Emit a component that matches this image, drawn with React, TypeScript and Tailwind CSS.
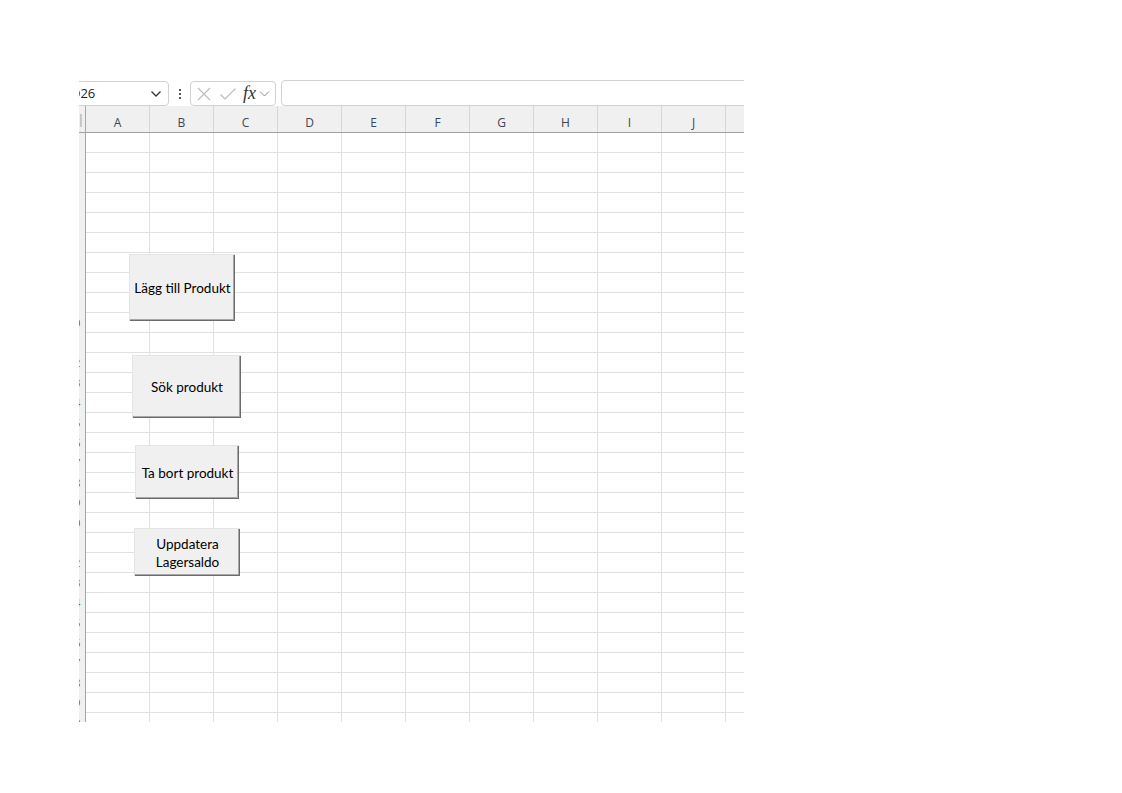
import React from "react";

const COLS = ["A", "B", "C", "D", "E", "F", "G", "H", "I", "J", ""];
const ROWS = Array.from({ length: 30 }, (_, i) => i + 1);

const uiFont = { fontFamily: '"Open Sans", "Noto Sans", sans-serif' };
const btnFont = { fontFamily: 'Lato, "Liberation Sans", sans-serif' };

function SheetButton({ label, className }: { label: React.ReactNode; className: string }) {
  return (
    <div
      className={`absolute flex items-center justify-center text-center text-[13.5px] leading-[18px] text-black bg-[#f0f0f0] border-t border-l border-[#e4e4e4] shadow-[inset_-1px_-1px_0_#6b6b6b,inset_-2px_-2px_0_#a8a8a8] ${className}`}
      style={btnFont}
    >
      {label}
    </div>
  );
}

function FormulaBar() {
  return (
    <div className="h-[26px] pt-[1px] flex items-start" style={uiFont}>
      <div className="-ml-[16px] w-[106px] h-[25px] shrink-0 border border-[#d1d1d1] rounded-[4px] bg-white flex items-center pl-[7px] pr-[6px]">
        <span className="flex-1 text-[13px] text-[#222]">D26</span>
        <svg width="12" height="8" viewBox="0 0 12 8" className="mt-[1px]">
          <path d="M1.5 1.5 L6 6 L10.5 1.5" fill="none" stroke="#333" strokeWidth="1.3" />
        </svg>
      </div>
      <div className="w-[21px] h-[25px] shrink-0 flex items-center justify-center">
        <svg width="4" height="12" viewBox="0 0 4 12">
          <circle cx="2" cy="2" r="1.1" fill="#333" />
          <circle cx="2" cy="6" r="1.1" fill="#333" />
          <circle cx="2" cy="10" r="1.1" fill="#333" />
        </svg>
      </div>
      <div className="w-[86px] h-[25px] shrink-0 border border-[#d1d1d1] rounded-[4px] bg-white flex items-center pl-[5px]">
        <svg width="16" height="16" viewBox="0 0 16 16" className="mr-[7px]">
          <path d="M2 2 L14 14 M14 2 L2 14" stroke="#bdbdbd" strokeWidth="1.2" fill="none" />
        </svg>
        <svg width="18" height="16" viewBox="0 0 18 16" className="mr-[6px]">
          <path d="M1.5 8.5 L6 13 L16.5 2.5" stroke="#bdbdbd" strokeWidth="1.2" fill="none" />
        </svg>
        <span
          className="italic text-[18px] leading-none text-[#333] mr-[3px] -mt-[2px]"
          style={{ fontFamily: '"Liberation Serif", "DejaVu Serif", serif' }}
        >
          fx
        </span>
        <svg width="11" height="8" viewBox="0 0 11 8" className="mt-[1px]">
          <path d="M1 1.5 L5.5 6 L10 1.5" fill="none" stroke="#8a8a8a" strokeWidth="1" />
        </svg>
      </div>
      <div className="ml-[5px] w-[500px] h-[26px] -mt-[1px] shrink-0 border border-[#d1d1d1] rounded-[4px] bg-white" />
    </div>
  );
}

function ColumnHeader() {
  return (
    <div className="h-[27px] flex border-b border-[#a0a0a0] bg-[#f0f0f0]" style={uiFont}>
      <div className="w-[7px] shrink-0 border-r border-[#a6a6a6] flex items-end pb-[5px] pl-[1px]">
        <div className="w-[2px] h-[13px] bg-[#c8c8c8]" />
      </div>
      {COLS.map((c, i) => (
        <div
          key={i}
          className="w-[64px] shrink-0 border-r border-[#d6d6d6] flex items-center justify-center text-[12px] text-[#3b4656] pt-[8px]"
        >
          {c}
        </div>
      ))}
    </div>
  );
}

function GridRow({ n }: { n: number }) {
  return (
    <div className="h-[20px] flex shrink-0">
      <div className="w-[7px] shrink-0 bg-[#f0f0f0] border-r border-[#a6a6a6] overflow-hidden flex justify-end">
        <span
          className="w-[22px] shrink-0 text-center text-[11px] leading-[20px] text-[#3a5a85]"
          style={uiFont}
        >
          {n}
        </span>
      </div>
      {COLS.map((_, i) => (
        <div key={i} className="w-[64px] shrink-0 border-r border-b border-[#e1e1e1]" />
      ))}
    </div>
  );
}

export default function App() {
  return (
    <div className="w-[1122px] h-[793px] bg-white relative pt-[80px] pl-[79px]">
      <div className="w-[665px] h-[642px] overflow-hidden flex flex-col">
        <FormulaBar />
        <ColumnHeader />
        <div className="flex-1 flex flex-col overflow-hidden">
          {ROWS.map((n) => (
            <GridRow key={n} n={n} />
          ))}
        </div>
      </div>

      <SheetButton label="Lägg till Produkt" className="left-[129px] top-[254px] w-[106px] h-[67px]" />
      <SheetButton label="Sök produkt" className="left-[132px] top-[355px] w-[109px] h-[63px]" />
      <SheetButton label="Ta bort produkt" className="left-[135px] top-[445px] w-[104px] h-[54px]" />
      <SheetButton
        label={
          <span>
            Uppdatera
            <br />
            Lagersaldo
          </span>
        }
        className="left-[134px] top-[528px] w-[106px] h-[48px]"
      />
    </div>
  );
}
